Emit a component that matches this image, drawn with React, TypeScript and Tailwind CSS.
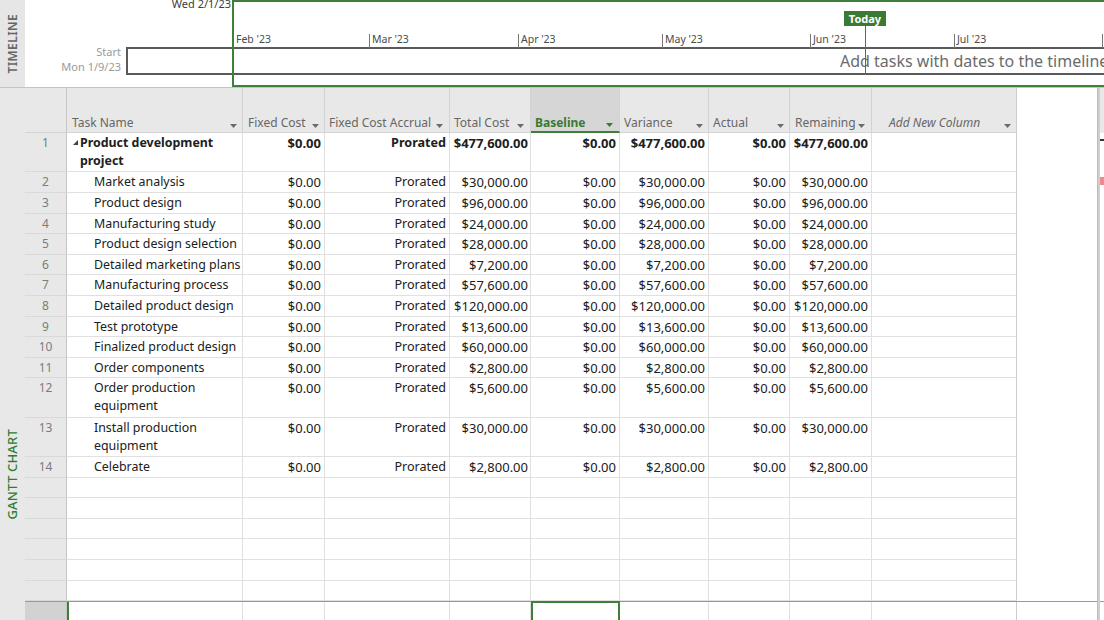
import React from "react";

const Arrow = ({ c = "#6b6b6b" }: { c?: string }) => (
  <svg width="7" height="4" viewBox="0 0 7 4" className="shrink-0 mb-[4px]">
    <path d="M0 0h7L3.5 4z" fill={c} />
  </svg>
);

type Row = {
  n: number;
  name: string[];
  fixed: string;
  total: string;
  base: string;
  variance: string;
  actual: string;
  remaining: string;
  bold?: boolean;
};

const rows: Row[] = [
  { n: 1, name: ["Product development", "project"], fixed: "$0.00", total: "$477,600.00", base: "$0.00", variance: "$477,600.00", actual: "$0.00", remaining: "$477,600.00", bold: true },
  { n: 2, name: ["Market analysis"], fixed: "$0.00", total: "$30,000.00", base: "$0.00", variance: "$30,000.00", actual: "$0.00", remaining: "$30,000.00" },
  { n: 3, name: ["Product design"], fixed: "$0.00", total: "$96,000.00", base: "$0.00", variance: "$96,000.00", actual: "$0.00", remaining: "$96,000.00" },
  { n: 4, name: ["Manufacturing study"], fixed: "$0.00", total: "$24,000.00", base: "$0.00", variance: "$24,000.00", actual: "$0.00", remaining: "$24,000.00" },
  { n: 5, name: ["Product design selection"], fixed: "$0.00", total: "$28,000.00", base: "$0.00", variance: "$28,000.00", actual: "$0.00", remaining: "$28,000.00" },
  { n: 6, name: ["Detailed marketing plans"], fixed: "$0.00", total: "$7,200.00", base: "$0.00", variance: "$7,200.00", actual: "$0.00", remaining: "$7,200.00" },
  { n: 7, name: ["Manufacturing process"], fixed: "$0.00", total: "$57,600.00", base: "$0.00", variance: "$57,600.00", actual: "$0.00", remaining: "$57,600.00" },
  { n: 8, name: ["Detailed product design"], fixed: "$0.00", total: "$120,000.00", base: "$0.00", variance: "$120,000.00", actual: "$0.00", remaining: "$120,000.00" },
  { n: 9, name: ["Test prototype"], fixed: "$0.00", total: "$13,600.00", base: "$0.00", variance: "$13,600.00", actual: "$0.00", remaining: "$13,600.00" },
  { n: 10, name: ["Finalized product design"], fixed: "$0.00", total: "$60,000.00", base: "$0.00", variance: "$60,000.00", actual: "$0.00", remaining: "$60,000.00" },
  { n: 11, name: ["Order components"], fixed: "$0.00", total: "$2,800.00", base: "$0.00", variance: "$2,800.00", actual: "$0.00", remaining: "$2,800.00" },
  { n: 12, name: ["Order production", "equipment"], fixed: "$0.00", total: "$5,600.00", base: "$0.00", variance: "$5,600.00", actual: "$0.00", remaining: "$5,600.00" },
  { n: 13, name: ["Install production", "equipment"], fixed: "$0.00", total: "$30,000.00", base: "$0.00", variance: "$30,000.00", actual: "$0.00", remaining: "$30,000.00" },
  { n: 14, name: ["Celebrate"], fixed: "$0.00", total: "$2,800.00", base: "$0.00", variance: "$2,800.00", actual: "$0.00", remaining: "$2,800.00" },
];

const cell = "shrink-0 border-b border-r border-[#e0e0e0] pt-[1px] leading-[18px] whitespace-nowrap";
const num = "w-[42px] shrink-0 bg-[#e8e8e8] border-b border-[#d9d9d9] border-r border-r-[#c6c6c6] pt-[1px] text-center text-[12px] leading-[18px] text-[#7c7c7c]";

function DataRow({ r }: { r: Row }) {
  const h = r.name.length > 1 ? "h-[39.4px]" : "h-[20.6px]";
  const b = r.bold ? "font-bold" : "";
  return (
    <div className={`flex ${h} text-[13px] text-[#202020]`}>
      <div className={num}>{r.n}</div>
      <div className={`${cell} w-[176px] text-[12.4px] ${r.bold ? "pl-[6px] flex items-start" : "pl-[27px]"}`}>
        {r.bold && (
          <svg width="5" height="5" viewBox="0 0 5 5" className="mt-[6px] mr-[2px] shrink-0">
            <path d="M5 0V5H0z" fill="#404040" />
          </svg>
        )}
        <div className={b}>
          {r.name.map((l, i) => (
            <div key={i}>{l}</div>
          ))}
        </div>
      </div>
      <div className={`${cell} w-[82px] text-right pr-[3px] ${b}`}>{r.fixed}</div>
      <div className={`${cell} w-[125px] text-right pr-[3px] text-[12.6px] ${b}`}>Prorated</div>
      <div className={`${cell} w-[81px] text-right pr-[2px] ${b}`}>{r.total}</div>
      <div className={`${cell} w-[89px] text-right pr-[3px] ${b}`}>{r.base}</div>
      <div className={`${cell} w-[89px] text-right pr-[3px] ${b}`}>{r.variance}</div>
      <div className={`${cell} w-[81px] text-right pr-[3px] ${b}`}>{r.actual}</div>
      <div className={`${cell} w-[82px] text-right pr-[3px] ${b}`}>{r.remaining}</div>
      <div className={`${cell} w-[145px] border-r-[#cccccc]`}></div>
    </div>
  );
}

function EmptyRow() {
  return (
    <div className="flex h-[20.6px]">
      <div className={num}></div>
      <div className={`${cell} w-[176px]`}></div>
      <div className={`${cell} w-[82px]`}></div>
      <div className={`${cell} w-[125px]`}></div>
      <div className={`${cell} w-[81px]`}></div>
      <div className={`${cell} w-[89px]`}></div>
      <div className={`${cell} w-[89px]`}></div>
      <div className={`${cell} w-[81px]`}></div>
      <div className={`${cell} w-[82px]`}></div>
      <div className={`${cell} w-[145px] border-r-[#cccccc]`}></div>
    </div>
  );
}

const hcell = "shrink-0 flex items-end justify-between border-r border-[#d3d3d3] leading-[18px] whitespace-nowrap";

function Month({ x, label, tick = true }: { x: number; label: string; tick?: boolean }) {
  return (
    <div className="absolute top-[33px] flex items-start" style={{ left: x }}>
      {tick && <div className="w-[1px] h-[14px] bg-[#777] mt-[1px]"></div>}
      <span className="ml-[2px] mt-[-1px] text-[10.5px] leading-[14px] text-[#4a4a4a]">{label}</span>
    </div>
  );
}

export default function App() {
  return (
    <div className="w-[1104px] h-[620px] overflow-hidden bg-white font-['Noto_Sans',sans-serif] flex flex-col">
      {/* Timeline */}
      <div className="flex h-[87px] shrink-0">
        <div className="w-[25px] shrink-0 bg-[#e6e6e6] flex items-center justify-center">
          <span className="[writing-mode:vertical-rl] rotate-180 text-[12px] font-semibold tracking-[0.4px] text-[#666]">
            TIMELINE
          </span>
        </div>
        <div className="relative flex-1 overflow-hidden">
          <div className="absolute left-[101px] top-[47px] w-[1100px] h-[28px] border-t-2 border-b-2 border-l-2 border-[#5a5a5a]"></div>
          <div className="absolute left-[126px] top-[-4px] w-[80px] text-right text-[11px] leading-[16px] text-[#404040]">Wed 2/1/23</div>
          <div className="absolute left-[207px] top-0 w-[1100px] h-[87px] border-2 border-[#3f7f3a]"></div>
          <div className="absolute left-[16px] top-[44px] w-[80px] text-right text-[11px] leading-[16px] text-[#9a9a9a]">Start</div>
          <div className="absolute left-[16px] top-[59px] w-[80px] text-right text-[11px] leading-[16px] text-[#9a9a9a]">Mon 1/9/23</div>
          <Month x={209} label="Feb '23" tick={false} />
          <Month x={344} label="Mar '23" />
          <Month x={493} label="Apr '23" />
          <Month x={637} label="May '23" />
          <Month x={785} label="Jun '23" />
          <Month x={929} label="Jul '23" />
          <Month x={1077} label="Aug '23" />
          <div className="absolute left-[815px] top-[49px] text-[16px] leading-[24px] text-[#6b6b6b] whitespace-nowrap">
            Add tasks with dates to the timeline
          </div>
          <div className="absolute left-[840px] top-[25px] w-[1px] h-[50px] bg-[#3f7f3a]"></div>
          <div className="absolute left-[819px] top-[11px] w-[42px] h-[15px] bg-[#3a7a33] text-white text-[11px] font-bold leading-[15px] text-center">
            Today
          </div>
        </div>
      </div>
      <div className="h-[1px] shrink-0 bg-[#c4c4c4]"></div>

      {/* Gantt table */}
      <div className="flex flex-1 min-h-0">
        <div className="w-[25px] shrink-0 bg-[#e8e8e8] flex flex-col items-center">
          <div className="h-[341px] shrink-0"></div>
          <span className="[writing-mode:vertical-rl] rotate-180 text-[13px] font-medium tracking-[0.2px] text-[#2f7d32]">
            GANTT CHART
          </span>
        </div>

        <div className="w-[992px] shrink-0 flex flex-col">
          {/* header */}
          <div className="flex h-[45px] shrink-0 bg-[#e8e8e8] border-b border-[#d3d3d3] text-[12px] text-[#666]">
            <div className="w-[42px] shrink-0 border-r border-[#c6c6c6]"></div>
            <div className={`${hcell} w-[176px] pl-[5px] pr-[5px]`}>
              <span>Task Name</span>
              <Arrow />
            </div>
            <div className={`${hcell} w-[82px] pl-[5px] pr-[5px]`}>
              <span>Fixed Cost</span>
              <Arrow />
            </div>
            <div className={`${hcell} w-[125px] pl-[4px] pr-[6px]`}>
              <span>Fixed Cost Accrual</span>
              <Arrow />
            </div>
            <div className={`${hcell} w-[81px] pl-[4px] pr-[6px]`}>
              <span>Total Cost</span>
              <Arrow />
            </div>
            <div className={`${hcell} w-[89px] pl-[4px] pr-[6px] bg-[#d6d6d6] border-b-2 border-b-[#3f7f3a] mb-[-1px]`}>
              <span className="font-bold text-[#3a7a33] mb-[-1px]">Baseline</span>
              <Arrow c="#3a7a33" />
            </div>
            <div className={`${hcell} w-[89px] pl-[4px] pr-[5px]`}>
              <span>Variance</span>
              <Arrow />
            </div>
            <div className={`${hcell} w-[81px] pl-[4px] pr-[5px]`}>
              <span>Actual</span>
              <Arrow />
            </div>
            <div className={`${hcell} w-[82px] pl-[5px] pr-[6px]`}>
              <span>Remaining</span>
              <Arrow />
            </div>
            <div className={`${hcell} w-[145px] pl-[17px] pr-[5px] border-r-[#cccccc]`}>
              <span className="italic">Add New Column</span>
              <Arrow />
            </div>
          </div>
          {rows.map((r) => (
            <DataRow key={r.n} r={r} />
          ))}
          {[0, 1, 2, 3, 4, 5].map((i) => (
            <EmptyRow key={i} />
          ))}
          {/* bottom row */}
          <div className="flex flex-1 border-t border-[#999]">
            <div className="w-[42px] shrink-0 bg-[#d2d2d2] border-r border-[#c6c6c6]"></div>
            <div className="w-[176px] shrink-0 border-l-2 border-[#3f7f3a] border-r border-r-[#e0e0e0]"></div>
            <div className="w-[82px] shrink-0 border-r border-[#e0e0e0]"></div>
            <div className="w-[125px] shrink-0 border-r border-[#e0e0e0]"></div>
            <div className="w-[81px] shrink-0 border-r border-[#e0e0e0]"></div>
            <div className="w-[89px] shrink-0 border-2 border-b-0 border-[#3f7f3a] mt-[-1px]"></div>
            <div className="w-[89px] shrink-0 border-r border-[#e0e0e0]"></div>
            <div className="w-[81px] shrink-0 border-r border-[#e0e0e0]"></div>
            <div className="w-[82px] shrink-0 border-r border-[#e0e0e0]"></div>
            <div className="w-[145px] shrink-0 border-r border-[#cccccc]"></div>
          </div>
        </div>

        <div className="w-[80px] shrink-0 flex flex-col bg-white">
          <div className="h-[513.4px] shrink-0"></div>
          <div className="flex-1 border-t border-[#999]"></div>
        </div>
        <div className="w-[3px] shrink-0 bg-[#cfcfcf] border-l border-[#bdbdbd]"></div>
        <div className="w-[4px] shrink-0 flex flex-col">
          <div className="h-[45px] shrink-0 bg-[#e8e8e8]"></div>
          <div className="h-[6px] shrink-0"></div>
          <div className="h-[2px] shrink-0 bg-[#333]"></div>
          <div className="h-[36px] shrink-0"></div>
          <div className="h-[8px] shrink-0 bg-[#f08a8a]"></div>
          <div className="flex-1"></div>
          <div className="h-[19px] shrink-0 border-t border-[#999]"></div>
        </div>
      </div>
    </div>
  );
}
